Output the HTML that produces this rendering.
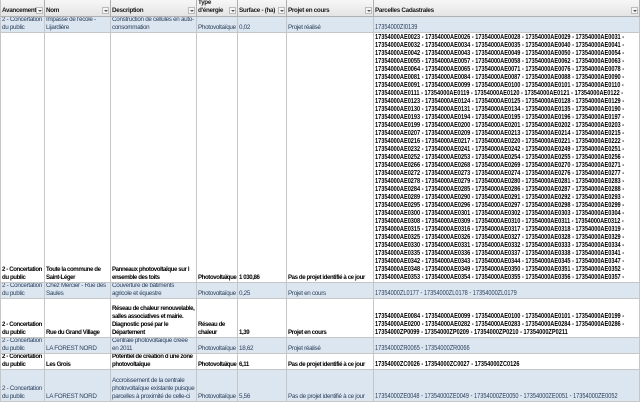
<!DOCTYPE html>
<html><head><meta charset="utf-8"><style>
body{margin:0;width:640px;height:402px;overflow:hidden;background:#fff;font-family:"Liberation Sans",Arial,sans-serif;position:relative;}
.c{position:absolute;box-sizing:border-box;border-right:1px solid #c6c6c6;border-bottom:1px solid #c6c6c6;padding:0 1px;font-size:6.3px;letter-spacing:-0.3px;line-height:8px;color:#222;overflow:hidden;display:flex;flex-direction:column;justify-content:flex-end;}
.h{background:linear-gradient(#f7f7f7,#e4e4e4);font-weight:bold;color:#1a1a1a;border-color:#b0b0b0;padding-right:8px;letter-spacing:-0.3px;padding-bottom:1px;}
.b{background:#dce6f1;color:#2b3f5c;}
.k{font-weight:bold;color:#000;font-size:6.1px;letter-spacing:-0.4px;}
.f{position:absolute;right:1px;bottom:2px;width:7px;height:7px;box-sizing:border-box;border:1px solid #bbb;background:#f4f4f4;}
.f:after{content:"";position:absolute;left:1px;top:2px;border-left:2px solid transparent;border-right:2px solid transparent;border-top:2px solid #555;}
.p{white-space:nowrap;font-weight:bold;color:#000;font-size:7px;letter-spacing:0;transform:scaleX(0.8);transform-origin:left;line-height:8px;}
.pn{white-space:nowrap;font-size:7px;letter-spacing:0;transform:scaleX(0.8);transform-origin:left;}
</style></head><body>
<div id="g"></div>
<script>
const X=[0,45,111,197,238,287,374,639];
const Y=[0,17,33,283,299,338,354,370,402];
const ids=[[23,26,28,29,31],[32,34,35,40,41],[42,43,49,50,54],[55,57,58,62,63],[64,65,71,76,78],[81,84,87,88,90],[91,99,100,101,110],[111,119,120,121,122],[123,124,125,128,129],[130,131,134,135,190],[193,194,195,196,197],[199,200,201,202,203],[207,209,213,214,215],[216,217,220,221,222],[232,241,242,249,251],[252,253,254,255,256],[266,268,269,270,271],[272,273,274,276,277],[278,279,280,281,283],[284,285,286,287,288],[289,290,291,292,293],[295,296,297,298,299],[300,301,302,303,304],[308,309,310,311,312],[315,316,317,318,319],[325,326,327,328,329],[330,331,332,333,334],[335,336,337,338,341],[342,343,344,345,347],[348,349,350,351,352],[353,354,355,356,357]];
const big=ids.map(l=>l.map(n=>'17354000AE'+String(n).padStart(4,'0')).join(' - ')+' -').join('<br>');
const rows=[
['h',['Avancement','Nom','Description','Type<br>d\'énergie','Surface - (ha)','Projet en cours','Parcelles Cadastrales']],
['b',['2 - Concertation du public','Impasse de l\'école - Lijardière','Construction de cellules en auto-consommation','Photovoltaïque','0,02','Projet réalisé','<div class="pn">17354000ZI0139</div>']],
['k',['2 - Concertation du public','Toute la commune de Saint-Léger','Panneaux photovoltaïque sur l ensemble des toits','Photovoltaïque','1 030,86','Pas de projet identifié à ce jour','<div class="p">'+big+'</div>']],
['b',['2 - Concertation du public','Chez Mercier - Rue des Saules','Couverture de bâtiments agricole et équestre','Photovoltaïque','0,25','Projet en cours','<div class="pn">17354000ZL0177 - 17354000ZL0178 - 17354000ZL0179</div>']],
['k',['2 - Concertation du public','Rue du Grand Village','Réseau de chaleur renouvelable, salles associatives et mairie. Diagnostic posé par le Département','Réseau de chaleur','1,39','Projet en cours','<div class="p">17354000AE0084 - 17354000AE0099 - 17354000AE0100 - 17354000AE0101 - 17354000AE0199 -<br>17354000AE0200 - 17354000AE0282 - 17354000AE0283 - 17354000AE0284 - 17354000AE0286 -<br>17354000ZP0099 - 17354000ZP0209 - 17354000ZP0210 - 17354000ZP0211</div>']],
['b',['2 - Concertation du public','LA FOREST NORD','Centrale photovoltaïque créée en 2011','Photovoltaïque','18,62','Projet réalisé','<div class="pn">17354000ZR0065 - 17354000ZR0066</div>']],
['k',['2 - Concertation du public','Les Grois','Potentiel de création d une zone photovoltaïque','Photovoltaïque','6,11','Pas de projet identifié à ce jour','<div class="p">17354000ZC0026 - 17354000ZC0027 - 17354000ZC0126</div>']],
['b',['2 - Concertation du public','LA FOREST NORD','Accroissement de la centrale photovoltaïque existante puisque parcelles à proximité de celle-ci','Photovoltaïque','5,56','Pas de projet identifié à ce jour','<div class="pn">17354000ZE0048 - 17354000ZE0049 - 17354000ZE0050 - 17354000ZE0051 - 17354000ZE0052</div>']]
];
let h='';
rows.forEach((r,i)=>{r[1].forEach((t,j)=>{
 let st=`left:${X[j]}px;top:${Y[i]}px;width:${X[j+1]-X[j]+(j==6?1:0)}px;height:${Y[i+1]-Y[i]}px;`;
 if(i==2&&j==6) st+='justify-content:flex-start;padding-top:1px;';
 if(j==0) st+='border-left:1px solid #c6c6c6;';
 h+=`<div class="c ${r[0]}" style="${st}">${t}${r[0]=='h'?'<span class="f"></span>':''}</div>`;
});});
document.getElementById('g').innerHTML=h;
</script>
</body></html>
